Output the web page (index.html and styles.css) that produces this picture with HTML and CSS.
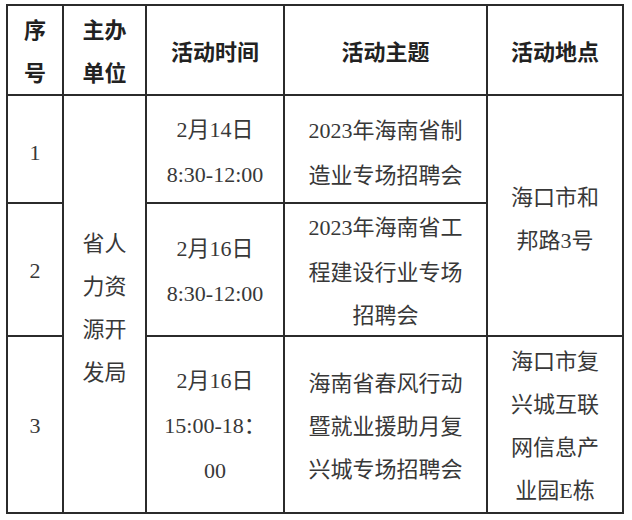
FILE: index.html
```html
<!DOCTYPE html>
<html lang="zh-CN">
<head>
<meta charset="utf-8">
<link rel="stylesheet" href="styles.css">
</head>
<body>
<table class="schedule">
  <colgroup>
    <col class="c1"><col class="c2"><col class="c3"><col class="c4"><col class="c5">
  </colgroup>
  <thead>
    <tr class="head">
      <th>序<br>号</th>
      <th>主办<br>单位</th>
      <th>活动时间</th>
      <th>活动主题</th>
      <th>活动地点</th>
    </tr>
  </thead>
  <tbody>
    <tr class="r1">
      <td><span class="n">1</span></td>
      <td rowspan="3" class="org">省人<br>力资<br>源开<br>发局</td>
      <td><span class="n">2</span>月<span class="n">14</span>日<br><span class="n">8:30-12:00</span></td>
      <td><span class="n">2023</span>年海南省制<br>造业专场招聘会</td>
      <td rowspan="2">海口市和<br>邦路<span class="n">3</span>号</td>
    </tr>
    <tr class="r2">
      <td><span class="n">2</span></td>
      <td><span class="n">2</span>月<span class="n">16</span>日<br><span class="n">8:30-12:00</span></td>
      <td><span class="n">2023</span>年海南省工<br>程建设行业专场<br>招聘会</td>
    </tr>
    <tr class="r3">
      <td><span class="n">3</span></td>
      <td><span class="n">2</span>月<span class="n">16</span>日<br><span class="n">15:00-18</span>：<br><span class="n">00</span></td>
      <td>海南省春风行动<br>暨就业援助月复<br>兴城专场招聘会</td>
      <td>海口市复<br>兴城互联<br>网信息产<br>业园<span class="n">E</span>栋</td>
    </tr>
  </tbody>
</table>
</body>
</html>
```

FILE: styles.css
```css
html, body {
  margin: 0;
  padding: 0;
  background: #ffffff;
}

body {
  padding: 4px 0 0 6px;
}

.schedule {
  border-collapse: separate;
  border-spacing: 0;
  table-layout: fixed;
  width: 618px;
  border-top: 2px solid #2b2b2b;
  border-left: 2px solid #2b2b2b;
  font-family: "Noto Sans CJK SC", "Liberation Serif", sans-serif;
  font-size: 22px;
  line-height: 43px;
  color: #383838;
}

.c1 { width: 56px; }
.c2 { width: 83px; }
.c3 { width: 138px; }
.c4 { width: 203px; }
.c5 { width: 136px; }

.schedule th,
.schedule td {
  border-right: 2px solid #2b2b2b;
  border-bottom: 2px solid #2b2b2b;
  padding: 0;
  text-align: center;
  vertical-align: middle;
  box-sizing: border-box;
  white-space: nowrap;
}

.schedule th {
  font-weight: 600;
  color: #222222;
}

.head { height: 90px; }
.r1 { height: 108px; }
.r2 { height: 133px; }
.r3 { height: 177px; }

.r1 td { padding-top: 4px; }
.org { padding-top: 6px; }

.n {
  font-family: "Liberation Serif", serif;
  font-size: 22px;
}
```
